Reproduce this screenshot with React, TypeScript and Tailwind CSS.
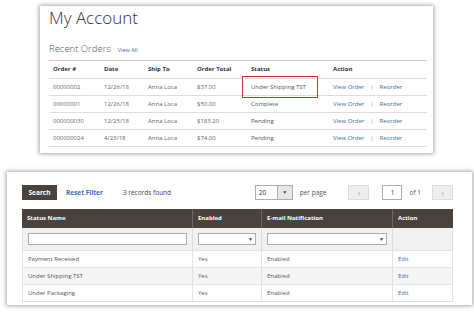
import React from "react";

const orders = [
  ["00000002", "12/26/18", "Anna Loca", "$37.00", "Under Shipping TST"],
  ["00000001", "12/26/18", "Anna Loca", "$50.00", "Complete"],
  ["000000030", "12/25/18", "Anna Loca", "$183.20", "Pending"],
  ["000000024", "4/23/18", "Anna Loca", "$74.00", "Pending"],
  ["000000018", "12/18/17", "Anna Loca", "$92.00", "Pending"],
];

const statuses = ["Payment Received", "Under Shipping TST", "Under Packaging"];

function Caret() {
  return <span className="text-[5px] text-[#444] leading-none">▼</span>;
}

export default function App() {
  return (
    <div
      className="w-[474px] h-[314px] bg-white overflow-hidden"
      style={{ fontFamily: '"Open Sans", "Liberation Sans", sans-serif' }}
    >
      {/* my account card */}
      <div className="ml-[40px] mt-[6px] w-[393px] h-[147px] bg-white overflow-hidden shadow-[0_0_4px_1px_rgba(0,0,0,0.35)] pl-[9px] pr-[6px]">
        <h1 className="pt-[2px] text-[17px] leading-[20px] font-light text-[#333]">My Account</h1>
        <div className="mt-[14px] flex items-baseline gap-[7px] h-[14px]">
          <span className="text-[9.5px] font-light text-[#555]">Recent Orders</span>
          <span className="text-[5.5px] text-[#3a6ea5]">View All</span>
        </div>
        <div className="mt-[4px] w-[378px] border-t border-[#ccc] text-[6px]">
          <div className="flex h-[17px] items-center font-bold text-[#333]">
            <div className="w-[51px] px-[4px]">Order #</div>
            <div className="w-[44px] px-[4px]">Date</div>
            <div className="w-[49px] px-[4px]">Ship To</div>
            <div className="w-[54px] px-[4px]">Order Total</div>
            <div className="w-[82px] px-[4px]">Status</div>
            <div className="flex-1 px-[4px]">Action</div>
          </div>
          {orders.map((o, i) => (
            <div key={i} className="flex h-[17px] items-center border-t border-[#ddd]">
              <div className="w-[51px] px-[4px] text-[#666]">{o[0]}</div>
              <div className="w-[44px] px-[4px] text-[#666]">{o[1]}</div>
              <div className="w-[49px] px-[4px] text-[#666]">{o[2]}</div>
              <div className="w-[54px] px-[4px] text-[#666]">{o[3]}</div>
              <div className="w-[82px] px-[4px] relative text-[#555]">
                {o[4]}
                {i === 0 && (
                  <div className="absolute left-[-5px] top-[-7px] w-[76px] h-[22px] border-[1.5px] border-[#d0312d]" />
                )}
              </div>
              <div className="flex-1 px-[4px] text-[#3a6ea5] flex gap-[6px]">
                <span>View Order</span>
                <span className="text-[#999]">|</span>
                <span>Reorder</span>
              </div>
            </div>
          ))}
        </div>
      </div>

      {/* order status grid card */}
      <div className="ml-[7px] mt-[19px] w-[465px] h-[133px] bg-white shadow-[0_0_4px_1px_rgba(0,0,0,0.35)] pl-[15px] pr-[19px] pt-[13px] text-[6px]">
        <div className="flex items-center h-[15px]">
          <div className="w-[35px] h-[15px] bg-[#4a423d] text-white font-bold flex items-center justify-center text-[6.5px]">
            Search
          </div>
          <span className="ml-[9px] text-[#3a6ea5] font-bold text-[6.5px]">Reset Filter</span>
          <span className="ml-[20px] text-[#444] text-[6.5px]">3 records found</span>
          <div className="ml-auto flex items-center h-[15px] text-[6.5px]">
            <div className="w-[38px] h-[15px] border border-[#adadad] flex">
              <span className="flex-1 pl-[3px] flex items-center text-[#333]">20</span>
              <span className="w-[15px] bg-[#e6e6e6] border-l border-[#adadad] flex items-center justify-center">
                <Caret />
              </span>
            </div>
            <span className="ml-[7px] text-[#555]">per page</span>
            <div className="ml-[22px] w-[21px] h-[15px] bg-[#eee] border border-[#ddd] flex items-center justify-center text-[#aaa] text-[9px]">
              ‹
            </div>
            <div className="ml-[13px] w-[20px] h-[15px] border border-[#adadad] flex items-center justify-center text-[#333]">
              1
            </div>
            <span className="ml-[7px] text-[#555]">of 1</span>
            <div className="ml-[11px] w-[21px] h-[15px] bg-[#eee] border border-[#ddd] flex items-center justify-center text-[#aaa] text-[9px]">
              ›
            </div>
          </div>
        </div>

        <div className="mt-[9px] w-[431px] border-b border-[#ddd]">
          <div className="flex h-[19px] bg-[#4a423d] text-white font-bold items-stretch">
            <div className="w-[171px] pl-[5px] flex items-center border-r border-[#6e6660]">Status Name</div>
            <div className="w-[69px] pl-[5px] flex items-center border-r border-[#6e6660]">Enabled</div>
            <div className="w-[131px] pl-[5px] flex items-center border-r border-[#6e6660]">E-mail Notification</div>
            <div className="flex-1 pl-[5px] flex items-center">Action</div>
          </div>
          <div className="flex h-[22px] bg-[#f1f1f1] border-x border-[#ddd]">
            <div className="w-[170px] px-[5px] flex items-center border-r border-[#ddd]">
              <div className="w-full h-[12px] bg-white border border-[#adadad]" />
            </div>
            <div className="w-[69px] px-[5px] flex items-center border-r border-[#ddd]">
              <div className="w-full h-[12px] bg-white border border-[#adadad] flex justify-end items-center pr-[2px]">
                <Caret />
              </div>
            </div>
            <div className="w-[131px] px-[5px] flex items-center border-r border-[#ddd]">
              <div className="w-full h-[12px] bg-white border border-[#adadad] flex justify-end items-center pr-[2px]">
                <Caret />
              </div>
            </div>
            <div className="flex-1" />
          </div>
          {statuses.map((s, i) => (
            <div
              key={s}
              className={`flex h-[17px] border-x border-t border-[#e3e3e3] ${i === 1 ? "bg-[#f5f5f5]" : "bg-white"}`}
            >
              <div className="w-[170px] pl-[5px] flex items-center border-r border-[#e3e3e3] text-[#555]">{s}</div>
              <div className="w-[69px] pl-[5px] flex items-center border-r border-[#e3e3e3] text-[#555]">Yes</div>
              <div className="w-[131px] pl-[5px] flex items-center border-r border-[#e3e3e3] text-[#555]">Enabled</div>
              <div className="flex-1 pl-[5px] flex items-center text-[#3a6ea5]">Edit</div>
            </div>
          ))}
        </div>
      </div>
    </div>
  );
}
